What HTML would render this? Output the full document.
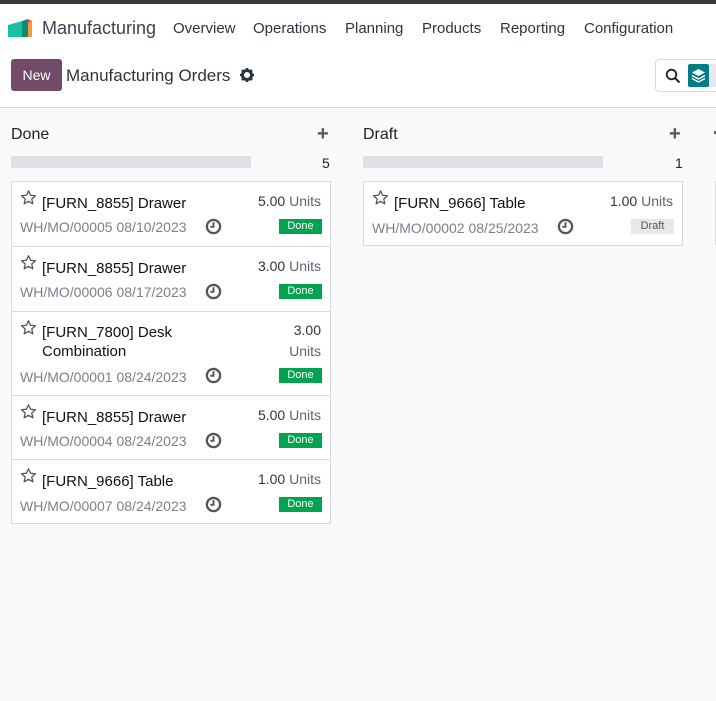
<!DOCTYPE html>
<html><head><meta charset="utf-8"><style>
*{box-sizing:border-box;margin:0;padding:0}
body{width:716px;height:701px;overflow:hidden;background:#f9fafb;font-family:"Liberation Sans",sans-serif;position:relative;color:#222}
.a{position:absolute;white-space:nowrap}
.top{left:0;top:0;width:716px;height:4px;background:#3a3a3a}
.nav{left:0;top:4px;width:716px;height:47px;background:#fff}
.cp{left:0;top:51px;width:716px;height:57px;background:#fff;border-bottom:1px solid #d8dadd}
.navi{top:20px;font-size:15px;color:#2d3440}
.card{position:absolute;background:#fff;border:1px solid #d8dadd;width:320px}
.star{position:absolute;left:8px;width:17px;height:17px}
.t{position:absolute;left:30px;font-size:15px;color:#111}
.q{position:absolute;right:9px;font-size:14px;color:#333;text-align:right}
.q span{color:#5f6570}
.r{position:absolute;left:8px;font-size:14px;color:#7a808a}
.clk{position:absolute;left:193px;width:17px;height:17px}
.b{position:absolute;right:8px;width:43px;height:15px;background:#00a34e;color:#fff;font-size:11px;text-align:center;line-height:15px}
.b.d{background:#e6e8eb;color:#555}
</style></head><body>
<div class="a top"></div>
<div class="a nav"></div>
<svg class="a" style="left:8px;top:19px" width="27" height="18" viewBox="0 0 27 18"><path d="M0 6 L14 2 L14 18 L0 18Z" fill="#1ac1a0"/><path d="M14 2 L20 0 L20 18 L14 18Z" fill="#0f8a7a"/><path d="M20 2 L24 2 L24 18 L20 18Z" fill="#f59a3a"/><path d="M20 0 L24 2 L20 4Z" fill="#e8505b"/></svg>
<div class="a" style="left:42px;top:18px;font-size:18px;color:#3a4150">Manufacturing</div>
<div class="a navi" style="left:173px">Overview</div>
<div class="a navi" style="left:253px">Operations</div>
<div class="a navi" style="left:345px">Planning</div>
<div class="a navi" style="left:422px">Products</div>
<div class="a navi" style="left:500px">Reporting</div>
<div class="a navi" style="left:584px">Configuration</div>
<div class="a cp"></div>
<div class="a" style="left:11px;top:59px;width:51px;height:32px;background:#714b67;border-radius:3px;color:#fff;font-size:14px;text-align:center;line-height:32px">New</div>
<div class="a" style="left:66px;top:66px;font-size:17px;color:#2d3440">Manufacturing Orders</div>
<svg class="a" style="left:240px;top:68px" width="14" height="14" viewBox="0 0 14 14"><circle cx="7" cy="7" r="4.5" fill="none" stroke="#2d3440" stroke-width="3"/><g stroke="#2d3440" stroke-width="2.6"><path d="M7 0v3M7 11v3M0 7h3M11 7h3M2 2l2 2M10 10l2 2M12 2l-2 2M2 12l2-2"/></g></svg>
<div class="a" style="left:655px;top:59px;width:70px;height:33px;border:1px solid #d8dadd;border-radius:4px;background:#fff"></div>
<svg class="a" style="left:665px;top:68px" width="16" height="16" viewBox="0 0 16 16"><circle cx="6.5" cy="6.5" r="4.8" fill="none" stroke="#222" stroke-width="1.8"/><path d="M10 10l4.5 4.5" stroke="#222" stroke-width="2"/></svg>
<div class="a" style="left:688px;top:64px;width:21px;height:23px;background:#017e84;border-radius:2px"></div>
<svg class="a" style="left:691px;top:68px" width="15" height="15" viewBox="0 0 15 15"><path d="M7.5 1L14 4.5 7.5 8 1 4.5Z" fill="#fff"/><path d="M1 7.5l6.5 3.5 6.5-3.5M1 10.5l6.5 3.5 6.5-3.5" fill="none" stroke="#fff" stroke-width="1.4"/></svg>
<div class="a" style="left:709px;top:64px;width:7px;height:23px;background:#e6e8eb"></div>

<div class="a" style="left:11px;top:126px;font-size:16px;color:#222">Done</div>
<div class="a" style="left:317px;top:123px;font-size:20px;color:#555;font-weight:bold">+</div>
<div class="a" style="left:11px;top:156px;width:240px;height:12px;background:#dee0e3"></div>
<div class="a" style="left:322px;top:155px;font-size:14px;color:#222">5</div>

<div class="a" style="left:363px;top:126px;font-size:16px;color:#222">Draft</div>
<div class="a" style="left:669px;top:123px;font-size:20px;color:#555;font-weight:bold">+</div>
<div class="a" style="left:363px;top:156px;width:240px;height:12px;background:#dee0e3"></div>
<div class="a" style="left:675px;top:155px;font-size:14px;color:#222">1</div>
<div class="a" style="left:714px;top:131px;width:2px;height:3px;background:#666"></div>
<div class="a" style="left:715px;top:181px;width:2px;height:64px;background:#d8dadd"></div>

<svg width="0" height="0" style="position:absolute"><defs>
<symbol id="st" viewBox="0 0 24 24"><path d="M12 2.5l2.9 6.3 6.9.7-5.2 4.6 1.5 6.8L12 17.4 5.9 20.9l1.5-6.8L2.2 9.5l6.9-.7z" fill="none" stroke="#555" stroke-width="1.8" stroke-linejoin="round"/></symbol>
<symbol id="ck" viewBox="0 0 16 16"><circle cx="8" cy="8" r="6.2" fill="none" stroke="#555" stroke-width="2.2"/><path d="M8 4v4.3H5" fill="none" stroke="#555" stroke-width="1.8"/></symbol>
</defs></svg>

<div class="card" style="left:11px;top:181px;height:66px">
<svg class="star" style="top:7px"><use href="#st"/></svg><div class="t" style="top:13px">[FURN_8855] Drawer</div>
<div class="q" style="top:11px">5.00 <span>Units</span></div>
<div class="r" style="top:37px">WH/MO/00005 08/10/2023</div><svg class="clk" style="top:36px"><use href="#ck"/></svg><div class="b" style="top:37px">Done</div></div>

<div class="card" style="left:11px;top:246px;height:66px">
<svg class="star" style="top:7px"><use href="#st"/></svg><div class="t" style="top:13px">[FURN_8855] Drawer</div>
<div class="q" style="top:11px">3.00 <span>Units</span></div>
<div class="r" style="top:37px">WH/MO/00006 08/17/2023</div><svg class="clk" style="top:36px"><use href="#ck"/></svg><div class="b" style="top:37px">Done</div></div>

<div class="card" style="left:11px;top:311px;height:85px">
<svg class="star" style="top:7px"><use href="#st"/></svg><div class="t" style="top:12px">[FURN_7800] Desk</div><div class="t" style="top:31px">Combination</div>
<div class="q" style="top:10px">3.00</div><div class="q" style="top:31px"><span>Units</span></div>
<div class="r" style="top:57px">WH/MO/00001 08/24/2023</div><svg class="clk" style="top:55px"><use href="#ck"/></svg><div class="b" style="top:56px">Done</div></div>

<div class="card" style="left:11px;top:395px;height:65px">
<svg class="star" style="top:7px"><use href="#st"/></svg><div class="t" style="top:13px">[FURN_8855] Drawer</div>
<div class="q" style="top:11px">5.00 <span>Units</span></div>
<div class="r" style="top:37px">WH/MO/00004 08/24/2023</div><svg class="clk" style="top:36px"><use href="#ck"/></svg><div class="b" style="top:37px">Done</div></div>

<div class="card" style="left:11px;top:459px;height:65px">
<svg class="star" style="top:7px"><use href="#st"/></svg><div class="t" style="top:13px">[FURN_9666] Table</div>
<div class="q" style="top:11px">1.00 <span>Units</span></div>
<div class="r" style="top:38px">WH/MO/00007 08/24/2023</div><svg class="clk" style="top:36px"><use href="#ck"/></svg><div class="b" style="top:37px">Done</div></div>

<div class="card" style="left:363px;top:181px;height:65px">
<svg class="star" style="top:7px"><use href="#st"/></svg><div class="t" style="top:13px">[FURN_9666] Table</div>
<div class="q" style="top:11px">1.00 <span>Units</span></div>
<div class="r" style="top:38px">WH/MO/00002 08/25/2023</div><svg class="clk" style="top:36px"><use href="#ck"/></svg><div class="b d" style="top:37px">Draft</div></div>
</body></html>
